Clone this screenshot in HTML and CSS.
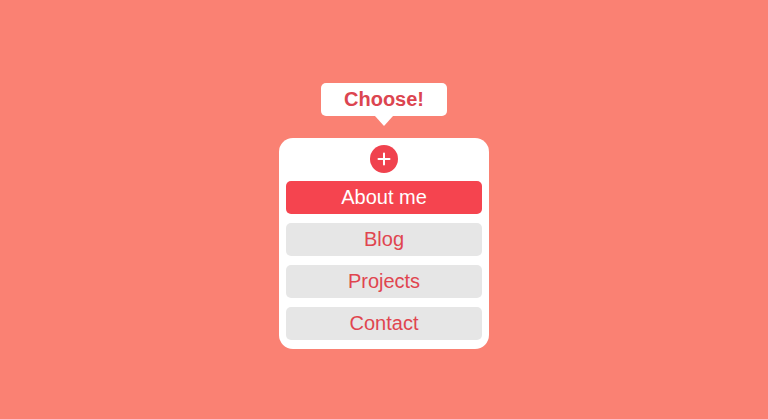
FILE: index.html
```html
<!DOCTYPE html>
<html lang="en">
<head>
  <meta charset="UTF-8">
  <title>Choose menu</title>
  <link rel="stylesheet" href="styles.css">
</head>
<body>
  <div class="wrap">
    <div class="tip">Choose!</div>

    <nav class="menu">
      <div class="plus">
        <svg width="14" height="14" viewBox="0 0 14 14">
          <path d="M7 1.5v11M1.5 7h11" stroke="#fff" stroke-width="2" stroke-linecap="round"/>
        </svg>
      </div>
      <a class="item active" href="#">About me</a>
      <a class="item" href="#">Blog</a>
      <a class="item" href="#">Projects</a>
      <a class="item" href="#">Contact</a>
    </nav>
  </div>
</body>
</html>
```

FILE: styles.css
```css
* {
  box-sizing: border-box;
}
body {
  margin: 0;
  height: 419px;
  background-color: #fa8173;
  font-family: 'Liberation Sans', Arial, sans-serif;
}
.wrap {
  display: flex;
  flex-direction: column;
  align-items: center;
  padding-top: 83px;
}
.tip {
  position: relative;
  width: 126px;
  height: 33px;
  background: #fff;
  border-radius: 5px;
  color: #dc4550;
  font-weight: bold;
  font-size: 20px;
  line-height: 33px;
  text-align: center;
  margin-bottom: 22px;
}
.tip::after {
  content: "";
  position: absolute;
  left: 50%;
  top: 33px;
  margin-left: -9px;
  border-left: 9px solid transparent;
  border-right: 9px solid transparent;
  border-top: 10px solid #fff;
}
.menu {
  width: 210px;
  background: #fff;
  border-radius: 14px;
  padding: 7px 7px 9px;
  display: flex;
  flex-direction: column;
  gap: 9px;
}
.plus {
  width: 28px;
  height: 28px;
  border-radius: 50%;
  background: #f0424e;
  align-self: center;
  display: flex;
  align-items: center;
  justify-content: center;
  margin-bottom: -1px;
}
.item {
  display: block;
  height: 33px;
  line-height: 33px;
  border-radius: 5px;
  background: #e6e6e6;
  color: #e0454f;
  font-size: 20px;
  text-align: center;
  text-decoration: none;
}
.item.active {
  background: #f5444f;
  color: #fff;
}
```
